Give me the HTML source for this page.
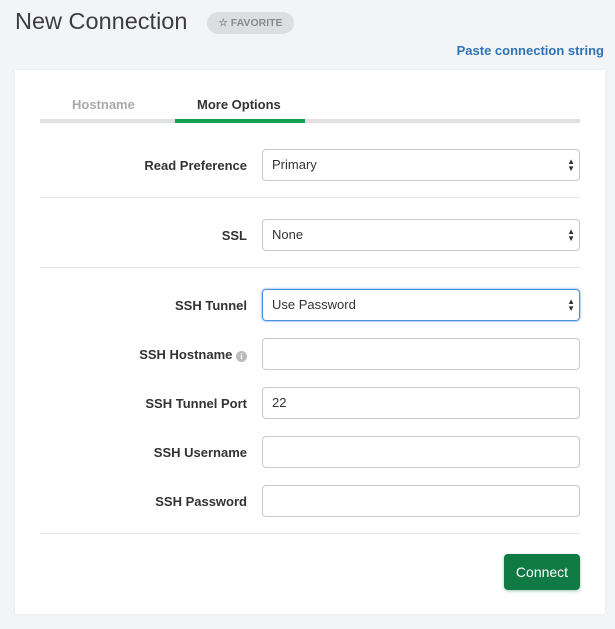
<!DOCTYPE html>
<html><head><style>
*{box-sizing:border-box;margin:0;padding:0}
body{width:615px;height:629px;background:#f3f4f6;font-family:"Liberation Sans",sans-serif;position:relative;overflow:hidden}
.a{position:absolute}
h1{position:absolute;left:15px;top:8px;font-size:23.5px;font-weight:normal;color:#3d3d3d}
.fav{left:207px;top:12px;width:87px;height:22px;border-radius:11px;background:#dcdee0;color:#868b90;font-size:10.5px;font-weight:bold;line-height:22px;text-align:center}
.paste{right:11px;top:43px;color:#2e73b8;font-size:13px;font-weight:bold}
.card{left:15px;top:70px;width:590px;height:544px;background:#fff;box-shadow:0 0 3px rgba(0,0,0,.06)}
.tab{top:97px;font-size:13px;font-weight:bold}
.bar{left:40px;top:119px;width:540px;height:4px;background:#e0e0e0}
.grn{left:175px;top:119px;width:130px;height:4px;background:#13a24f}
.lbl{right:368px;font-size:13px;font-weight:bold;color:#333;text-align:right}
.inp{left:262px;width:318px;height:32px;border:1px solid #c9c9c9;border-radius:4px;font-size:13px;color:#333;padding:0 9px;line-height:30px}
.hr{left:40px;width:540px;height:1px;background:#e6e6e6}
.arr{position:absolute;right:4px;top:8px;font-size:8px;line-height:7px;color:#333}
.btn{left:504px;top:554px;width:76px;height:36px;background:#107a45;border-radius:4px;color:#fff;font-size:14px;line-height:36px;text-align:center;box-shadow:0 1px 3px rgba(16,122,69,.4)}
</style></head><body>
<h1>New Connection</h1>
<div class="a fav">☆ FAVORITE</div>
<div class="a paste">Paste connection string</div>
<div class="a card"></div>
<div class="a tab" style="left:72px;color:#aaa">Hostname</div>
<div class="a tab" style="left:197px;color:#333">More Options</div>
<div class="a bar"></div><div class="a grn"></div>

<div class="a lbl" style="top:158px">Read Preference</div>
<div class="a inp" style="top:149px">Primary<div class="arr">▲<br>▼</div></div>
<div class="a hr" style="top:197px"></div>
<div class="a lbl" style="top:228px">SSL</div>
<div class="a inp" style="top:219px">None<div class="arr">▲<br>▼</div></div>
<div class="a hr" style="top:267px"></div>
<div class="a lbl" style="top:298px">SSH Tunnel</div>
<div class="a inp" style="top:289px;border-color:#4a90e2;box-shadow:0 0 2px #4a90e2">Use Password<div class="arr">▲<br>▼</div></div>
<div class="a lbl" style="top:347px">SSH Hostname <span style="display:inline-block;width:11px;height:11px;border-radius:50%;background:#bbb;color:#fff;font-size:8px;line-height:11px;text-align:center;vertical-align:0">i</span></div>
<div class="a inp" style="top:338px"></div>
<div class="a lbl" style="top:396px">SSH Tunnel Port</div>
<div class="a inp" style="top:387px">22</div>
<div class="a lbl" style="top:445px">SSH Username</div>
<div class="a inp" style="top:436px"></div>
<div class="a lbl" style="top:494px">SSH Password</div>
<div class="a inp" style="top:485px"></div>
<div class="a hr" style="top:533px"></div>
<div class="a btn">Connect</div>
</body></html>
